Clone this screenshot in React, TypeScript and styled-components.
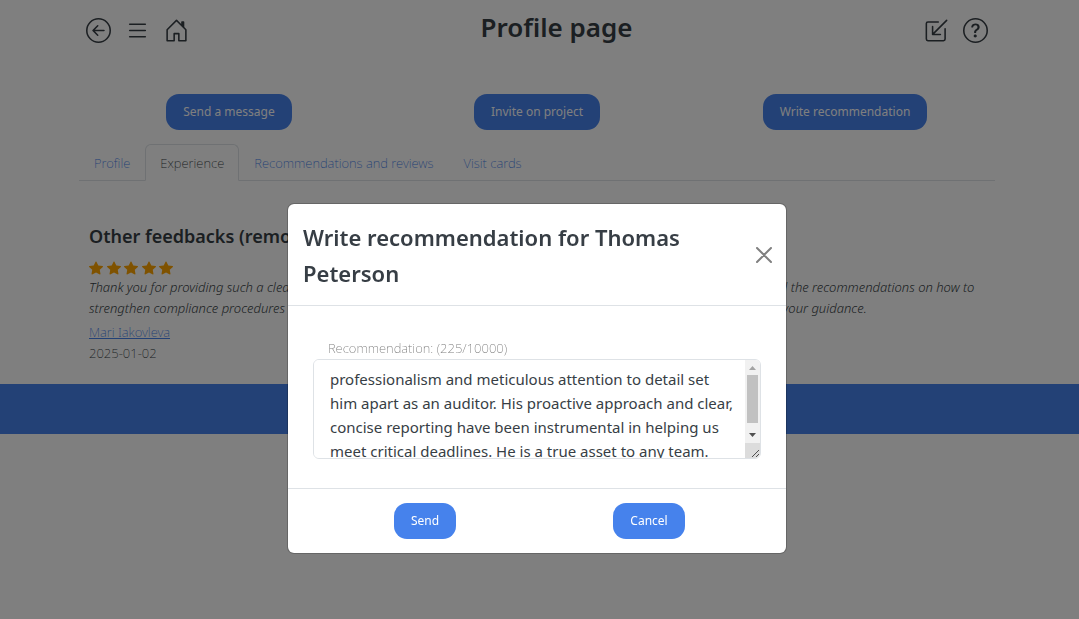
import React from 'react';
import styled, { createGlobalStyle, css } from 'styled-components';
import {
  BsArrowLeftCircle,
  BsBoxArrowInDownLeft,
  BsHouseDoor,
  BsList,
  BsQuestionCircle,
  BsStarFill,
} from 'react-icons/bs';

const primary = '#4682ec';
const ink = '#373e45';

const GlobalStyle = createGlobalStyle`
  *, *::before, *::after { box-sizing: border-box; }
  body {
    margin: 0;
    background: #fff;
    color: ${ink};
    font-family: "Noto Sans", sans-serif;
    font-size: 13px;
    font-weight: 200;
    line-height: 21px;
  }
  h1, h2, p { margin: 0; }
`;

const Page = styled.div`
  padding-right: 5px;
`;

const Container = styled.div`
  padding: 0 79px;
`;

const Header = styled.header`
  display: flex;
  justify-content: space-between;
  align-items: flex-start;
  height: 94px;
  padding: 9px 7px 0;
`;

const IconGroup = styled.nav`
  display: flex;
  gap: 14px;
  padding-top: 9px;
`;

const IconButton = styled.button`
  display: flex;
  padding: 0;
  border: 0;
  background: none;
  color: ${ink};
  font-size: 25px;
`;

const PageTitle = styled.h1`
  font-size: 26px;
  font-weight: 600;
  line-height: 36px;
`;

const Actions = styled.div`
  display: grid;
  grid-template-columns: repeat(3, 1fr);
  justify-items: center;
  margin: 0 -4px 14px;
`;

const Button = styled.button`
  height: 36px;
  padding: 0 17px;
  border: 0;
  border-radius: 13px;
  background: ${primary};
  color: #fff;
  font: 400 12px/18px "Noto Sans", sans-serif;
`;

const Tabs = styled.nav`
  display: flex;
  border-bottom: 1px solid #dee2e6;
`;

const Tab = styled.a<{ $active?: boolean }>`
  margin-bottom: -1px;
  padding: 8px 14px 6px;
  border: 1px solid transparent;
  border-radius: 6px 6px 0 0;
  color: ${primary};
  text-decoration: none;
  ${(p) =>
    p.$active &&
    css`
      border-color: #dee2e6 #dee2e6 #fff;
      background: #fff;
      color: ${ink};
    `}
`;

const Feedback = styled.section`
  padding: 42px 10px 20px;
`;

const SectionTitle = styled.h2`
  font-size: 18px;
  font-weight: 600;
  line-height: 26px;
`;

const Stars = styled.div`
  display: flex;
  justify-content: space-between;
  width: 84px;
  margin-top: 12px;
  color: #ffa500;
  font-size: 14px;
`;

const Quote = styled.p`
  margin: 2px 0 3px;
  font-weight: 300;
  font-style: italic;
`;

const AuthorLink = styled.a`
  color: ${primary};
`;

const Band = styled.footer`
  height: 50px;
  margin-right: -5px;
  background: ${primary};
`;

const Backdrop = styled.div`
  position: fixed;
  inset: 0;
  display: flex;
  align-items: flex-start;
  justify-content: center;
  padding: 203px 5px 0 0;
  background: rgba(0, 0, 0, 0.5);
`;

const Dialog = styled.div`
  width: 500px;
  max-width: 100%;
  border: 1px solid rgba(0, 0, 0, 0.2);
  border-radius: 7px;
  background: #fff;
  background-clip: padding-box;
`;

const DialogHeader = styled.div`
  display: flex;
  align-items: center;
  justify-content: space-between;
  padding: 15px 14px 14px 15px;
  border-bottom: 1px solid #dee2e6;
`;

const DialogTitle = styled.h2`
  max-width: 420px;
  font-size: 22px;
  font-weight: 600;
  line-height: 36px;
`;

const CloseButton = styled.button`
  display: flex;
  padding: 0;
  border: 0;
  background: none;
  color: #808080;
`;

const DialogBody = styled.div`
  padding: 32px 25px 29px;
`;

const Label = styled.label`
  display: block;
  padding-left: 15px;
  color: #808080;
`;

const Field = styled.div`
  position: relative;
  height: 100px;
  border: 1px solid #dee2e6;
  border-radius: 6px;
  overflow: hidden;
`;

const TextArea = styled.textarea`
  display: block;
  width: 100%;
  height: 100%;
  padding: 7px 24px 5px 16px;
  border: 0;
  outline: 0;
  resize: none;
  scrollbar-width: none;
  background: #fff;
  color: ${ink};
  font: 400 15px/24px "Noto Sans", sans-serif;
`;

const ScrollTrack = styled.svg`
  position: absolute;
  top: 0;
  right: 0;
`;

const DialogFooter = styled.div`
  display: grid;
  grid-template-columns: 1fr 1fr;
  justify-items: center;
  padding: 14px 25px;
  border-top: 1px solid #dee2e6;
`;

const tabs = ['Profile', 'Experience', 'Recommendations and reviews', 'Visit cards'];

const recommendation =
  'professionalism and meticulous attention to detail set him apart as an auditor. His proactive approach and clear, concise reporting have been instrumental in helping us meet critical deadlines. He is a true asset to any team.';

export default function App() {
  return (
    <>
      <GlobalStyle />
      <Page>
        <Container>
          <Header>
            <IconGroup>
              <IconButton aria-label="Back"><BsArrowLeftCircle /></IconButton>
              <IconButton aria-label="Menu"><BsList /></IconButton>
              <IconButton aria-label="Home"><BsHouseDoor /></IconButton>
            </IconGroup>
            <PageTitle>Profile page</PageTitle>
            <IconGroup>
              <IconButton aria-label="Sign in"><BsBoxArrowInDownLeft /></IconButton>
              <IconButton aria-label="Help"><BsQuestionCircle /></IconButton>
            </IconGroup>
          </Header>
          <Actions>
            <Button>Send a message</Button>
            <Button>Invite on project</Button>
            <Button>Write recommendation</Button>
          </Actions>
          <Tabs>
            {tabs.map((name) => (
              <Tab key={name} href="#" $active={name === 'Experience'}>{name}</Tab>
            ))}
          </Tabs>
          <Feedback>
            <SectionTitle>Other feedbacks (remote)</SectionTitle>
            <Stars role="img" aria-label="5 of 5">
              {[1, 2, 3, 4, 5].map((n) => <BsStarFill key={n} />)}
            </Stars>
            <Quote>
              Thank you for providing such a clear and thorough audit of our company. Your findings were clearly
              presented, and I valued the recommendations on how to strengthen compliance procedures being practical and
              easy to follow for the team. We are looking forward to working with your guidance.
            </Quote>
            <AuthorLink href="#">Mari Iakovleva</AuthorLink>
            <div>2025-01-02</div>
          </Feedback>
        </Container>
        <Band />
      </Page>
      <Backdrop>
        <Dialog role="dialog" aria-modal="true" aria-labelledby="dialog-title">
          <DialogHeader>
            <DialogTitle id="dialog-title">Write recommendation for Thomas Peterson</DialogTitle>
            <CloseButton aria-label="Close">
              <svg width="16" height="16" viewBox="0 0 16 16" fill="none" stroke="currentColor" strokeWidth="2" strokeLinecap="round">
                <path d="M1 1l14 14M15 1L1 15" />
              </svg>
            </CloseButton>
          </DialogHeader>
          <DialogBody>
            <Label htmlFor="recommendation">Recommendation: (225/10000)</Label>
            <Field>
              <TextArea id="recommendation" defaultValue={recommendation} />
              <ScrollTrack width="15" height="98" viewBox="0 0 15 98" aria-hidden="true">
                <rect width="15" height="83" fill="#f1f1f1" />
                <path d="M4 10l3.500-4 3.500 4z" fill="#a3a3a3" />
                <rect x="2" y="15" width="11" height="48" fill="#c1c1c1" />
                <path d="M4 73l3.500 4 3.500-4z" fill="#505050" />
                <rect y="83" width="15" height="15" fill="#dcdcdc" />
                <path d="M7 97l7-7M11 97l3-3" stroke="#505050" fill="none" />
              </ScrollTrack>
            </Field>
          </DialogBody>
          <DialogFooter>
            <Button>Send</Button>
            <Button>Cancel</Button>
          </DialogFooter>
        </Dialog>
      </Backdrop>
    </>
  );
}
